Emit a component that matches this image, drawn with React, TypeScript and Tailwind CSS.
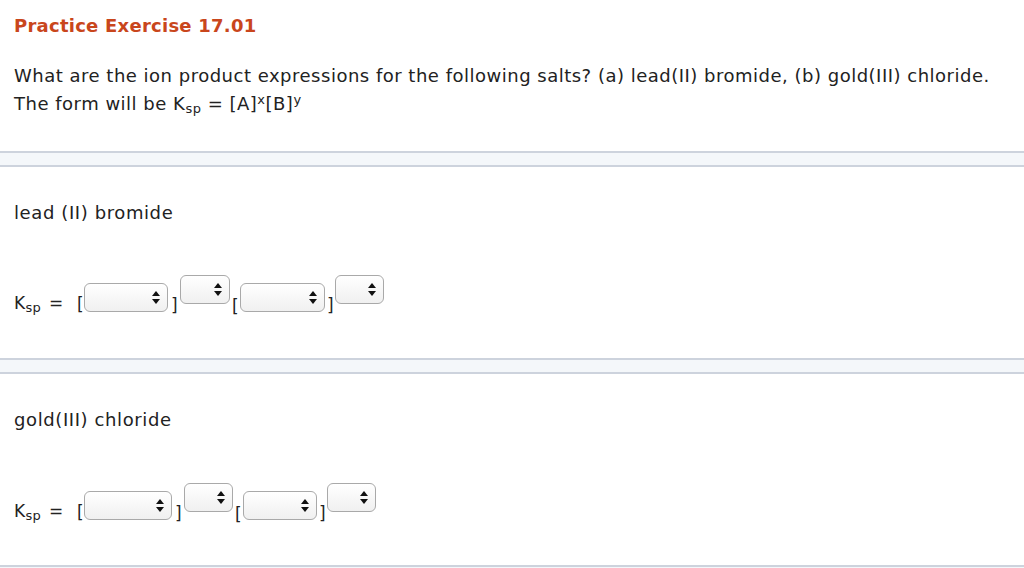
import React from 'react';

const font = { fontFamily: '"DejaVu Sans", Verdana, sans-serif' };

const Arrows: React.FC = () => (
  <svg width="8" height="13" viewBox="0 0 8 13" className="block">
    <polygon points="0,5 4,0 8,5" fill="#111" />
    <polygon points="0,8 8,8 4,13" fill="#111" />
  </svg>
);

const Select: React.FC<{ className: string }> = ({ className }) => (
  <div
    className={`flex h-[29px] items-center justify-end rounded-[6px] border border-[#a9a9a9] bg-gradient-to-b from-white to-[#f0f0f0] pr-[7px] ${className}`}
  >
    <Arrows />
  </div>
);

const Divider: React.FC = () => (
  <div className="h-[16px] border-y-2 border-y-[#cdd3dd] bg-[#f4f7fa]" />
);

const Bracket: React.FC<{ ch: string; className: string }> = ({ ch, className }) => (
  <span className={`text-[17px] leading-none text-[#222] ${className}`}>{ch}</span>
);

type RowProps = {
  w: [string, string, string, string];
};

const KspRow: React.FC<RowProps> = ({ w }) => (
  <div className="flex items-start pl-[14px]">
    <span className="mt-[20px] w-[63px] text-[17px] leading-none tracking-[0.3px] text-[#222]">
      K<sub className="text-[13px]">sp</sub>
      <span className="ml-[8px]">=</span>
    </span>
    <Bracket ch="[" className="mt-[21px] w-[7px]" />
    <Select className={`mt-[8px] ${w[0]}`} />
    <Bracket ch="]" className="mt-[22px] ml-[3px] w-[9px]" />
    <Select className={w[1]} />
    <Bracket ch="[" className="mt-[23px] ml-[2px] w-[8px]" />
    <Select className={`mt-[8px] ${w[2]}`} />
    <Bracket ch="]" className="mt-[22px] ml-[2px] w-[8px]" />
    <Select className={w[3]} />
  </div>
);

const App: React.FC = () => {
  return (
    <div className="h-[568px] w-[1024px] overflow-hidden bg-white text-[#222]" style={font}>
      <div className="px-[14px] pt-[14px]">
        <h1 className="text-[18px] font-bold leading-[24px] tracking-[0.25px] text-[#c9461c]">
          Practice Exercise 17.01
        </h1>
        <p className="mt-[24px] text-[18px] leading-[28px] tracking-[0.5px]">
          What are the ion product expressions for the following salts? (a) lead(II) bromide, (b) gold(III) chloride.
          <br />
          The form will be K<sub className="text-[13px]">sp</sub> = [A]<sup className="text-[13px]">x</sup>[B]<sup className="text-[13px]">y</sup>
        </p>
      </div>

      <div className="mt-[33px]">
        <Divider />
      </div>

      <div className="h-[191px]">
        <p className="pl-[14px] pt-[36px] text-[18px] leading-[20px] tracking-[0.6px]">lead (II) bromide</p>
        <div className="mt-[52px]">
          <KspRow w={['w-[84px]', 'w-[50px]', 'w-[85px]', 'w-[49px]']} />
        </div>
      </div>

      <Divider />

      <div className="h-[191px]">
        <p className="pl-[14px] pt-[36px] text-[18px] leading-[20px] tracking-[0.6px]">gold(III) chloride</p>
        <div className="mt-[53px]">
          <KspRow w={['w-[88px]', 'w-[49px]', 'w-[74px]', 'w-[49px]']} />
        </div>
      </div>

      <div className="h-[3px] border-t-2 border-t-[#cdd3dd] bg-[#f4f7fa]" />
    </div>
  );
};

export default App;
